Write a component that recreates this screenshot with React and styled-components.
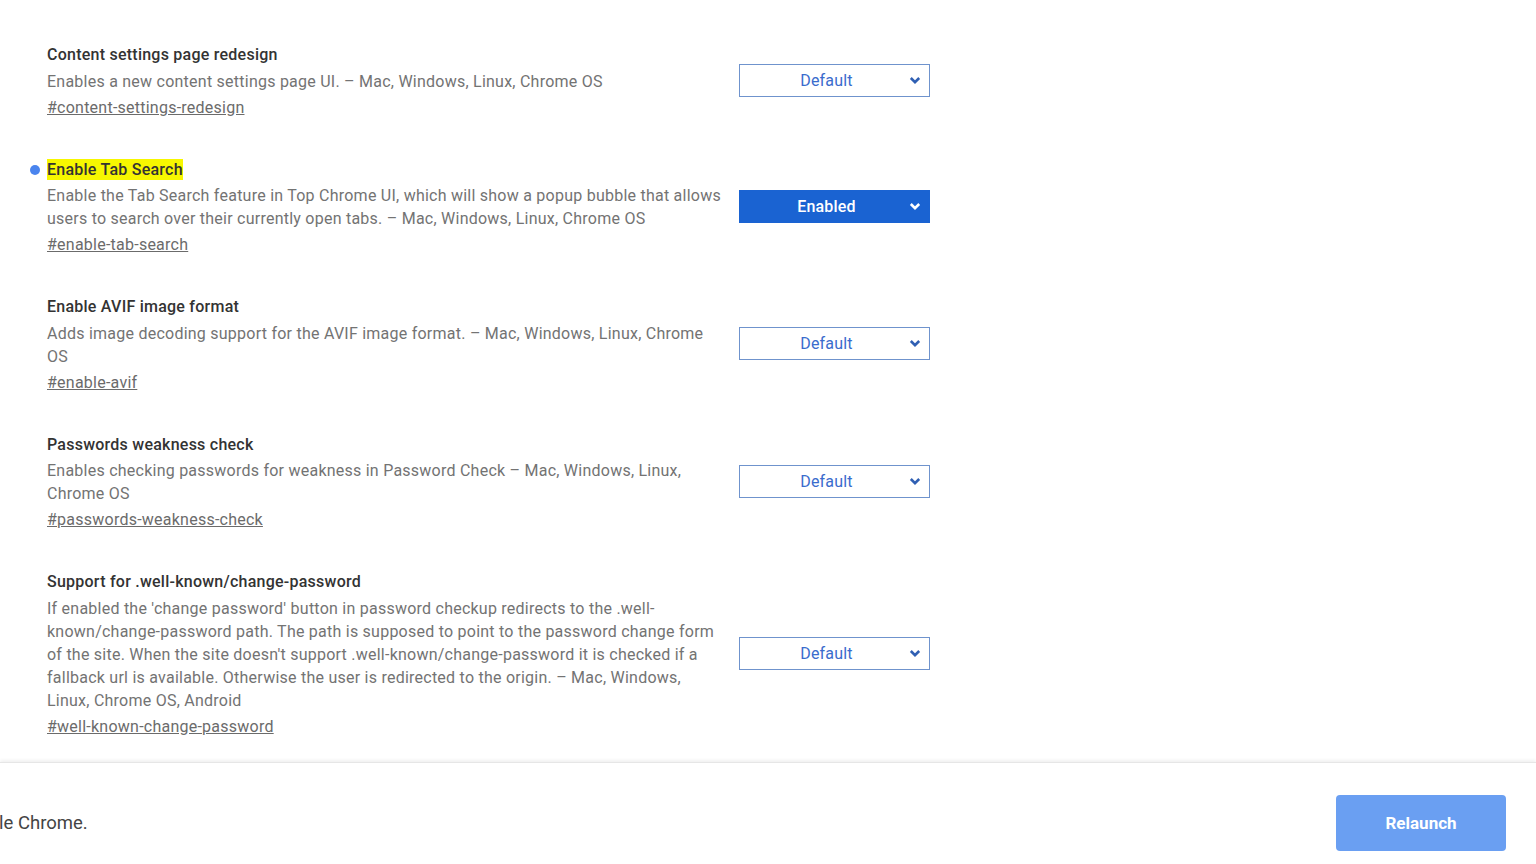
import React from "react";
import styled, { createGlobalStyle } from "styled-components";

const Global = createGlobalStyle`
  html, body { margin: 0; padding: 0; background: #fff; }
  body { font-family: Roboto, "Noto Sans", Arial, sans-serif; overflow: hidden; }
  * { box-sizing: border-box; }
`;

const Page = styled.div`
  display: flex;
  flex-direction: column;
  height: 864px;
  width: 1536px;
`;

const List = styled.main`
  flex: 1;
  display: flex;
  flex-direction: column;
  gap: 38px;
  padding: 42px 0 0 47px;
  overflow: hidden;
`;

const Row = styled.section`
  display: flex;
  align-items: center;
  gap: 16px;
`;

const Info = styled.div`
  width: 676px;
  display: flex;
  flex-direction: column;
  letter-spacing: 0.24px;
`;

const Title = styled.h3`
  position: relative;
  margin: 0;
  font-size: 16px;
  font-weight: 500;
  line-height: 26px;
  color: #333;
`;

const Mark = styled.span`
  background: ${(p) => (p.$hl ? "#f7f700" : "transparent")};
  padding: 1px 0;
`;

const Dot = styled.span`
  position: absolute;
  left: -17px;
  top: 8px;
  width: 10px;
  height: 10px;
  border-radius: 50%;
  background: #4a84ee;
`;

const Desc = styled.p`
  margin: 1.5px 0 0;
  font-size: 16px;
  line-height: 23px;
  color: #737373;
`;

const Link = styled.a`
  margin-top: 3px;
  font-size: 16px;
  line-height: 23px;
  color: #6b6b6b;
  text-decoration: underline;
  align-self: flex-start;
`;

const Select = styled.div`
  width: 191px;
  height: 33px;
  display: flex;
  align-items: center;
  padding: 0 8px 0 0;
  border: 1px solid ${(p) => (p.$on ? "#1a63d2" : "#6f93cd")};
  background: ${(p) => (p.$on ? "#1a63d2" : "#fff")};
  color: ${(p) => (p.$on ? "#fff" : "#3a6ccd")};
  font-size: 16px;
  letter-spacing: 0.2px;
  font-weight: ${(p) => (p.$on ? 500 : 400)};
`;

const SelText = styled.span`
  flex: 1;
  text-align: center;
  padding-left: 4px;
`;

const Chevron = ({ on }) => (
  <svg width="12" height="9" viewBox="0 0 12 9">
    <path
      d="M1.8 2 L6 6.2 L10.2 2"
      fill="none"
      stroke={on ? "#fff" : "#2f5fb3"}
      strokeWidth="2.6"
    />
  </svg>
);

const Footer = styled.footer`
  height: 102px;
  flex-shrink: 0;
  border-top: 1px solid #e6e6e6;
  box-shadow: 0 -2px 3px rgba(0, 0, 0, 0.06);
  display: flex;
  align-items: flex-start;
  justify-content: space-between;
  padding: 32px 30px 0 0;
`;

const Note = styled.div`
  height: 55px;
  display: flex;
  align-items: center;
  white-space: nowrap;
  font-size: 18.5px;
  color: #444;
  margin-left: -1px;
`;

const Relaunch = styled.button`
  width: 170px;
  height: 56px;
  border: none;
  border-radius: 4px;
  background: #6a9ff2;
  color: #fff;
  font-family: Roboto, Arial, sans-serif;
  font-size: 17px;
  font-weight: 700;
`;

const flags = [
  {
    title: "Content settings page redesign",
    desc: "Enables a new content settings page UI. – Mac, Windows, Linux, Chrome OS",
    link: "#content-settings-redesign",
  },
  {
    title: "Enable Tab Search",
    desc: "Enable the Tab Search feature in Top Chrome UI, which will show a popup bubble that allows users to search over their currently open tabs. – Mac, Windows, Linux, Chrome OS",
    link: "#enable-tab-search",
    on: true,
  },
  {
    title: "Enable AVIF image format",
    desc: "Adds image decoding support for the AVIF image format. – Mac, Windows, Linux, Chrome OS",
    link: "#enable-avif",
  },
  {
    title: "Passwords weakness check",
    desc: "Enables checking passwords for weakness in Password Check – Mac, Windows, Linux, Chrome OS",
    link: "#passwords-weakness-check",
  },
  {
    title: "Support for .well-known/change-password",
    desc: "If enabled the 'change password' button in password checkup redirects to the .well-known/change-password path. The path is supposed to point to the password change form of the site. When the site doesn't support .well-known/change-password it is checked if a fallback url is available. Otherwise the user is redirected to the origin. – Mac, Windows, Linux, Chrome OS, Android",
    link: "#well-known-change-password",
  },
];

export default function App() {
  return (
    <Page>
      <Global />
      <List>
        {flags.map((f) => (
          <Row key={f.link}>
            <Info>
              <Title>
                {f.on && <Dot />}
                <Mark $hl={f.on}>{f.title}</Mark>
              </Title>
              <Desc>{f.desc}</Desc>
              <Link href={f.link}>{f.link}</Link>
            </Info>
            <Select $on={f.on}>
              <SelText>{f.on ? "Enabled" : "Default"}</SelText>
              <Chevron on={f.on} />
            </Select>
          </Row>
        ))}
      </List>
      <Footer>
        <Note>le Chrome.</Note>
        <Relaunch>Relaunch</Relaunch>
      </Footer>
    </Page>
  );
}
